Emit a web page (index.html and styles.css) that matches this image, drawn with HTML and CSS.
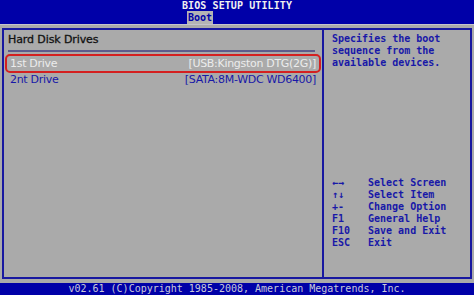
FILE: index.html
```html
<!DOCTYPE html>
<html lang="en">
<head>
  <meta charset="UTF-8">
  <meta name="viewport" content="width=device-width, initial-scale=1.0">
  <title>BIOS Setup Utility</title>
  <link rel="stylesheet" href="styles.css">
</head>
<body>
  <div class="header">
    <div class="title">BIOS SETUP UTILITY</div>
    <div class="tabs">
      <span class="tab active">Boot</span>
    </div>
  </div>

  <div class="frame">
    <div class="panel">
      <div class="section-title">Hard Disk Drives</div>
      <div class="row selected">
        <span>1st Drive</span>
        <span>[USB:Kingston DTG(2G)]</span>
      </div>
      <div class="row">
        <span>2nt Drive</span>
        <span>[SATA:8M-WDC WD6400]</span>
      </div>
    </div>
    <div class="help">
      <div class="help-text">Specifies the boot<br>sequence from the<br>available devices.</div>
      <div class="keys">
        <span class="key">←→</span><span>Select Screen</span>
        <span class="key">↑↓</span><span>Select Item</span>
        <span class="key">+-</span><span>Change Option</span>
        <span class="key">F1</span><span>General Help</span>
        <span class="key">F10</span><span>Save and Exit</span>
        <span class="key">ESC</span><span>Exit</span>
      </div>
    </div>
  </div>

  <div class="footer">v02.61 (C)Copyright 1985-2008, American Megatrends, Inc.</div>
</body>
</html>
```

FILE: styles.css
```css
body {
  margin: 0;
  width: 474px;
  height: 295px;
  background-color: #aaaaaa;
  font-family: "DejaVu Sans Mono", "Liberation Mono", monospace;
  font-size: 10px;
  overflow: hidden;
}

.header {
  height: 24px;
  background-color: #0000a8;
  display: flex;
  flex-direction: column;
  align-items: center;
  border-bottom: 1px solid #c4c4cc;
}

.title {
  color: #f0f0f0;
  font-weight: bold;
  line-height: 11px;
  letter-spacing: 0.1px;
}

.tabs {
  display: flex;
  justify-content: center;
  width: 100%;
  padding-right: 74px;
  box-sizing: border-box;
}

.tab {
  line-height: 13px;
  padding: 0 1px;
  font-weight: bold;
  color: #0000a8;
}

.tab.active {
  background-color: #b4b4b4;
}

.frame {
  display: flex;
  height: 251px;
  margin: 3px 2px 4px 2px;
  border: 2px solid #1818a0;
  box-sizing: border-box;
}

.panel {
  width: 316px;
  border-right: 2px solid #1818a0;
  padding: 2px 1px 0 1px;
  font-family: "DejaVu Sans", Verdana, sans-serif;
  font-size: 11px;
}

.section-title {
  margin: 0 6px 0 3px;
  padding: 1px 0 4px;
  color: #111111;
  border-bottom: 2px solid #5c5c8c;
  letter-spacing: -0.1px;
  -webkit-text-stroke: 0.3px #111111;
}

.row {
  display: flex;
  justify-content: space-between;
  padding: 0 5px 0 5px;
  line-height: 13px;
  color: #1818a8;
  letter-spacing: -0.3px;
}

.row.selected {
  margin-top: 2px;
  padding: 1px 3px 1px 3px;
  color: #ececec;
  border: 2px solid #d42020;
  border-radius: 5px;
}

.help {
  flex: 1;
  display: flex;
  flex-direction: column;
  justify-content: space-between;
  padding: 3px 6px 28px 8px;
  color: #1818a8;
  font-weight: bold;
}

.help-text {
  line-height: 12px;
}

.keys {
  display: grid;
  grid-template-columns: 36px auto;
  line-height: 12px;
}

.footer {
  height: 12px;
  background-color: #0000a8;
  color: #c8c8d8;
  text-align: center;
  line-height: 12px;
}
```
